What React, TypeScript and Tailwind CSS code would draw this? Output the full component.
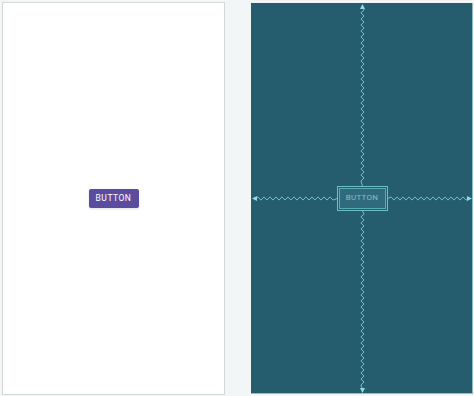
import React from 'react';

const zigzag = (x1: number, y1: number, x2: number, y2: number, step = 3, amp = 1.6) => {
  const dx = x2 - x1;
  const dy = y2 - y1;
  const len = Math.hypot(dx, dy);
  const ux = dx / len;
  const uy = dy / len;
  const nx = -uy;
  const ny = ux;
  const n = Math.floor(len / step);
  const pts: string[] = [`${x1},${y1}`];
  for (let i = 1; i < n; i++) {
    const s = i * step;
    const o = i % 2 === 0 ? amp : -amp;
    pts.push(`${(x1 + ux * s + nx * o).toFixed(1)},${(y1 + uy * s + ny * o).toFixed(1)}`);
  }
  pts.push(`${x2},${y2}`);
  return pts.join(' ');
};

const Constraints: React.FC = () => {
  // blueprint is 222x391; button box sits at 86..137 / 183..208
  const cx = 111.5;
  const cy = 195.5;
  return (
    <svg className="absolute inset-0 pointer-events-none" width="222" height="391" viewBox="0 0 222 391">
      <g stroke="#7fd0dc" strokeWidth="1" fill="none" opacity="0.85">
        <polyline points={zigzag(cx, 4, cx, 183)} />
        <polyline points={zigzag(cx, 208, cx, 387)} />
        <polyline points={zigzag(4, cy, 86, cy)} />
        <polyline points={zigzag(137, cy, 218, cy)} />
      </g>
      <g fill="#8fdbe6">
        <path d={`M${cx} 1 L${cx - 2.5} 6 L${cx + 2.5} 6 Z`} />
        <path d={`M${cx} 390 L${cx - 2.5} 385 L${cx + 2.5} 385 Z`} />
        <path d={`M1 ${cy} L6 ${cy - 2.5} L6 ${cy + 2.5} Z`} />
        <path d={`M221 ${cy} L216 ${cy - 2.5} L216 ${cy + 2.5} Z`} />
      </g>
    </svg>
  );
};

export default function App() {
  return (
    <div
      className="w-[474px] h-[396px] bg-[#f2f6f6] flex items-start pl-[2px] pt-[2px] gap-[26px]"
      style={{ fontFamily: 'Roboto, "Noto Sans", sans-serif' }}
    >
      <div className="w-[223px] h-[393px] bg-white border border-[#d6d8d8] flex items-center justify-center">
        <button className="w-[50px] h-[19px] rounded-[2px] bg-[#5b4c9f] text-white text-[8.5px] font-normal tracking-[0.5px] leading-none flex items-center justify-center shadow-sm">
          BUTTON
        </button>
      </div>
      <div className="relative w-[222px] h-[391px] mt-[1px] bg-[#255d6f] border-r border-b border-[#8fbfca] flex items-center justify-center">
        <Constraints />
        <div className="relative w-[51px] h-[25px] ml-[1px] border border-[#6fbfca] p-[1px]">
          <div className="w-full h-full border border-[#5aaab6] bg-[#2f6b7c] flex items-center justify-center text-[8px] text-[#86bfc9] tracking-[0.3px] leading-none">
            BUTTON
          </div>
        </div>
      </div>
    </div>
  );
}
